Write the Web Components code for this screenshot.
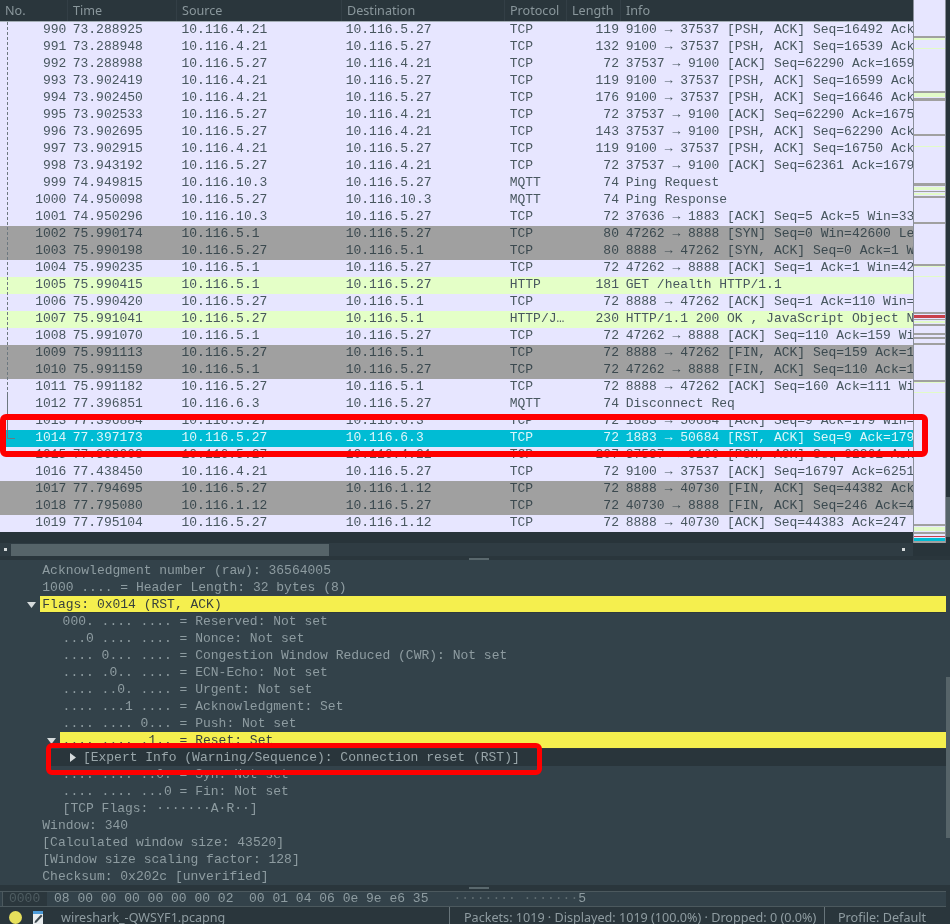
<!DOCTYPE html>
<html><head><meta charset="utf-8"><title>Wireshark</title>
<style>
html,body{margin:0;height:924px;overflow:hidden;background:#2a363c}
ws-app{filter:blur(.45px)}
</style></head>
<body>
<ws-app></ws-app>
<script>
const MONO='"Liberation Mono",monospace';
const SANS='"Noto Sans",sans-serif';
function def(name,css,html,init){
  customElements.define(name,class extends HTMLElement{
    connectedCallback(){
      if(this.shadowRoot)return;
      const r=this.attachShadow({mode:'open'});
      r.innerHTML='<style>'+css+'</style>'+html;
      if(init)init.call(this,r);
    }
  });
}
const A=' \u2192 ';
const PSH=s=>'9100'+A+'37537 [PSH, ACK] Seq='+s+' Ack';
const I4='10.116.4.21',F='10.116.5.27',P1='10.116.5.1',T3='10.116.10.3',S3='10.116.6.3',O12='10.116.1.12';
const packets=[
['990','73.288925',I4,F,'TCP','119',PSH(16492)],
['991','73.288948',I4,F,'TCP','132',PSH(16539)],
['992','73.288988',F,I4,'TCP','72','37537'+A+'9100 [ACK] Seq=62290 Ack=1659'],
['993','73.902419',I4,F,'TCP','119',PSH(16599)],
['994','73.902450',I4,F,'TCP','176',PSH(16646)],
['995','73.902533',F,I4,'TCP','72','37537'+A+'9100 [ACK] Seq=62290 Ack=1675'],
['996','73.902695',F,I4,'TCP','143','37537'+A+'9100 [PSH, ACK] Seq=62290 Ack'],
['997','73.902915',I4,F,'TCP','119',PSH(16750)],
['998','73.943192',F,I4,'TCP','72','37537'+A+'9100 [ACK] Seq=62361 Ack=1679'],
['999','74.949815',T3,F,'MQTT','74','Ping Request'],
['1000','74.950098',F,T3,'MQTT','74','Ping Response'],
['1001','74.950296',T3,F,'TCP','72','37636'+A+'1883 [ACK] Seq=5 Ack=5 Win=33'],
['1002','75.990174',P1,F,'TCP','80','47262'+A+'8888 [SYN] Seq=0 Win=42600 Le','g'],
['1003','75.990198',F,P1,'TCP','80','8888'+A+'47262 [SYN, ACK] Seq=0 Ack=1 W','g'],
['1004','75.990235',P1,F,'TCP','72','47262'+A+'8888 [ACK] Seq=1 Ack=1 Win=42'],
['1005','75.990415',P1,F,'HTTP','181','GET /health HTTP/1.1','h'],
['1006','75.990420',F,P1,'TCP','72','8888'+A+'47262 [ACK] Seq=1 Ack=110 Win='],
['1007','75.991041',F,P1,'HTTP/J\u2026','230','HTTP/1.1 200 OK , JavaScript Object N','h'],
['1008','75.991070',P1,F,'TCP','72','47262'+A+'8888 [ACK] Seq=110 Ack=159 Wi'],
['1009','75.991113',F,P1,'TCP','72','8888'+A+'47262 [FIN, ACK] Seq=159 Ack=1','g'],
['1010','75.991159',P1,F,'TCP','72','47262'+A+'8888 [FIN, ACK] Seq=110 Ack=1','g'],
['1011','75.991182',F,P1,'TCP','72','8888'+A+'47262 [ACK] Seq=160 Ack=111 Wi'],
['1012','77.396851',S3,F,'MQTT','74','Disconnect Req'],
['1013','77.396884',F,S3,'TCP','72','1883'+A+'50684 [ACK] Seq=9 Ack=179 Win='],
['1014','77.397173',F,S3,'TCP','72','1883'+A+'50684 [RST, ACK] Seq=9 Ack=179','s'],
['1015','77.398008',F,I4,'TCP','207','37537'+A+'9100 [PSH, ACK] Seq=62361 Ack'],
['1016','77.438450',I4,F,'TCP','72','9100'+A+'37537 [ACK] Seq=16797 Ack=6251'],
['1017','77.794695',F,O12,'TCP','72','8888'+A+'40730 [FIN, ACK] Seq=44382 Ack','g'],
['1018','77.795080',O12,F,'TCP','72','40730'+A+'8888 [FIN, ACK] Seq=246 Ack=4','g'],
['1019','77.795104',F,O12,'TCP','72','8888'+A+'40730 [ACK] Seq=44383 Ack=247']
];
const details=[
[0,'Acknowledgment number (raw): 36564005'],
[0,'1000 .... = Header Length: 32 bytes (8)'],
[0,'Flags: 0x014 (RST, ACK)','sel','down'],
[1,'000. .... .... = Reserved: Not set'],
[1,'...0 .... .... = Nonce: Not set'],
[1,'.... 0... .... = Congestion Window Reduced (CWR): Not set'],
[1,'.... .0.. .... = ECN-Echo: Not set'],
[1,'.... ..0. .... = Urgent: Not set'],
[1,'.... ...1 .... = Acknowledgment: Set'],
[1,'.... .... 0... = Push: Not set'],
[1,'.... .... .1.. = Reset: Set','sel','down'],
[2,'[Expert Info (Warning/Sequence): Connection reset (RST)]','dark','right'],
[1,'.... .... ..0. = Syn: Not set'],
[1,'.... .... ...0 = Fin: Not set'],
[1,'[TCP Flags: \u00b7\u00b7\u00b7\u00b7\u00b7\u00b7\u00b7A\u00b7R\u00b7\u00b7]'],
[0,'Window: 340'],
[0,'[Calculated window size: 43520]'],
[0,'[Window size scaling factor: 128]'],
[0,'Checksum: 0x202c [unverified]']
];

def('ws-packet-header',
`:host{display:grid;grid-template-columns:68px 109px 165px 163px 62px 54px 1fr;height:21px;background:#2a363c;border-bottom:1px solid #a3adb5;
 font:12.6px/21px ${SANS};color:#8a979c}
 div{padding-left:5px;border-right:1px solid #333f46;white-space:nowrap;overflow:hidden}
 div:first-child{padding-left:4px}div:last-child{border:0}`,
`<div>No.</div><div>Time</div><div>Source</div><div>Destination</div><div>Protocol</div><div>Length</div><div>Info</div>`);

def('ws-packet-row',
`:host{display:grid;grid-template-columns:72.7px 108.8px 164.2px 164px 60px 49.3px 1fr;height:17px;background:#e7e6ff;color:#48575f;font:13px/15px ${MONO};overflow:hidden;white-space:pre}
 :host([kind=g]){background:#a0a0a0;color:#3b494f}
 :host([kind=h]){background:#e4ffc7}
 :host([kind=s]){background:#00bcd4;color:#dcf6fa}
 span{overflow:hidden}
 .n{text-align:right;padding-right:6.3px}
 .l{text-align:right}
 .i{padding-left:6.7px}`,
`<span class="n"></span><span></span><span></span><span></span><span></span><span class="l"></span><span class="i"></span>`,
function(r){
  r.querySelectorAll('span').forEach((s,i)=>{s.textContent=this.cells[i];});
});

def('ws-packet-list',
`:host{display:block;position:relative;height:510px;overflow:hidden;background:#e7e6ff}
 svg{position:absolute;left:0;top:0;pointer-events:none}`,
`<div id="r"></div>
 <svg width="20" height="510" viewBox="0 0 20 510"><path d="M7.5 0V371" fill="none" stroke="#6d7880" stroke-dasharray="3 2"/><path d="M7.5 371V416.500H15" fill="none" stroke="#6d7880"/></svg>`,
function(r){
  const box=r.getElementById('r');
  packets.forEach(p=>{
    const e=document.createElement('ws-packet-row');
    if(p[7])e.setAttribute('kind',p[7]);
    e.cells=p.slice(0,7);
    box.appendChild(e);
  });
});

def('ws-minimap',
`:host{display:block;width:32px;height:543px;background:#e7e6ff;border-left:1px solid #8b909b;border-right:1px solid #8b909b;overflow:hidden}
 svg{display:block}`,
`<svg width="32" height="543" viewBox="0 0 32 543"></svg>`,
function(r){
  const G='#a0a0a0',L='#e2fbc8',R='#c8404a',C='#00bcd4';
  const m=[[36,2,G],[38,2,L],[48,1,L],[91,2,G],[93,4,L],[98,3,G],[134,2,G],[146,1,L],[183,3,G],[187,3,L],[191,1,G],[193,2,L],[196,2,G],
  [222,2,G],[264,2,G],[266,1,L],[276,1,L],[312,2,G],[315,3,R],[319,1,G],[321,2,L],[324,2,G],[333,2,G],[337,2,G],[343,2,G],
  [380,2,G],[382,1,L],[392,1,L],[524,2,G],[527,4,L],[532,2,G],[536,1,R],[538,3,C],[541,2,G]];
  r.querySelector('svg').innerHTML=m.map(x=>`<rect x="0" y="${x[0]}" width="32" height="${x[1]}" fill="${x[2]}"/>`).join('');
});

def('ws-hscroll',
`:host{display:flex;flex-direction:column;height:24px;background:#28343a}
 .t{margin-top:11px;height:13px;display:flex;align-items:center;background:#2f3c43;padding:0 4px}
 i{display:block;width:3px;height:3px;background:#d5dadb}
 b{display:block;width:318px;height:12px;background:#566469;margin:0 auto 0 4px}`,
`<div class="t"><i></i><b></b><i style="margin-right:4px"></i></div>`);

def('ws-vbar',
`:host{display:block;position:relative;width:4px;background:#28343a;overflow:hidden}
 i{position:absolute;left:0;right:0;background:#566469}`,
`<i></i>`,function(r){const i=r.querySelector('i');i.style.top=this.getAttribute('from')+'px';i.style.height=this.getAttribute('len')+'px';});

def('ws-detail-row',
`:host{display:flex;height:17px;font:13px/17px ${MONO};color:#8e9ca1;white-space:pre}
 :host([state=dark]){background:linear-gradient(90deg,transparent 48px,#29353b 48px);color:#98a5a9}
 .g{flex:none;display:flex;justify-content:flex-end;align-items:center}
 .g svg{display:block;margin-right:4px}
 .b{flex:1;padding-left:2.6px;overflow:hidden}
 :host([state=sel]) .b{background:#f5ef4e;color:#37403d;border-bottom:1px solid #2f3a3c;box-sizing:border-box}`,
`<div class="g"></div><div class="b"><slot></slot></div>`,
function(r){
  const lv=+this.getAttribute('level'),a=this.getAttribute('arrow'),g=r.querySelector('.g');
  g.style.width=(39.7+lv*20.3)+'px';
  if(a==='down')g.innerHTML='<svg width="9" height="6"><path d="M0 0H9L4.5 6Z" fill="#d6dbdc"/></svg>';
  if(a==='right')g.innerHTML='<svg width="6" height="9"><path d="M0 0V9L6 4.5Z" fill="#d6dbdc"/></svg>';
});

def('ws-detail-pane',
`:host{display:flex;height:325px;background:#33424a}
 .c{flex:none;width:946px;padding-top:2px;box-sizing:border-box;overflow:hidden}`,
`<div class="c"></div><ws-vbar from="117" len="161" style="background:#33424a"></ws-vbar>`,
function(r){
  const c=r.querySelector('.c');
  details.forEach(d=>{
    const e=document.createElement('ws-detail-row');
    e.setAttribute('level',d[0]);
    if(d[2])e.setAttribute('state',d[2]);
    if(d[3])e.setAttribute('arrow',d[3]);
    e.textContent=d[1];
    c.appendChild(e);
  });
});

def('ws-splitter',
`:host{display:flow-root;background:#2a363c;height:6px}
 i{display:block;width:20px;height:2px;margin:2px 0 0 469px;background:#5a686d}`,`<i></i>`);

def('ws-hex-pane',
`:host{display:flex;height:14px;margin-right:4px;border-top:1px solid #4c595e;border-bottom:1px solid #4c595e;background:#33424a;font:13px/14px ${MONO};color:#8e9ca1;white-space:pre;overflow:hidden}
 .o{flex:none;width:45px;box-sizing:border-box;padding-left:6px;margin-left:2px;background:#2b373d;color:#4f5d62;border-left:1px solid #4c595e}
 .h{flex:none;width:399.4px;padding-left:7px;box-sizing:border-box}
 .d{color:#5f6d72}`,
`<span class="o">0000</span><span class="h">08 00 00 00 00 00 00 02  00 01 04 06 0e 9e e6 35</span><span style="padding-left:7px"><span class="d">\u00b7\u00b7\u00b7\u00b7\u00b7\u00b7\u00b7\u00b7 \u00b7\u00b7\u00b7\u00b7\u00b7\u00b7\u00b7</span>5</span>`);

def('ws-status-bar',
`:host{display:flex;align-items:flex-start;height:17px;background:#2a363c;font:12.6px/22px ${SANS};color:#8f9ca1;white-space:nowrap;overflow:hidden}
 .c{flex:none;margin:4px 0 0 9px;width:13px;height:13px;border-radius:50%;background:#e6e05c}
 svg{flex:none;margin:3px 0 0 10px}
 .f{flex:none;width:405px;padding-left:17px;box-sizing:border-box}
 .s{flex:none;border-left:1px solid #67747a;height:17px;box-sizing:border-box}
 .p{width:375px;padding-left:14px}
 .q{padding-left:13px}`,
`<div class="c"></div>
 <svg width="12" height="15" viewBox="0 0 12 15"><path d="M1 1H11V15H1Z" fill="#e9edef"/><path d="M1 1H11V4H1Z" fill="#4d9bd8"/><path d="M3 11L9 4.5L10.5 6L4.5 12.5L2.5 13Z" fill="#3f4a50"/></svg>
 <div class="f">wireshark_-QWSYF1.pcapng</div>
 <div class="s p">Packets: 1019 \u00b7 Displayed: 1019 (100.0%) \u00b7 Dropped: 0 (0.0%)</div>
 <div class="s q">Profile: Default</div>`);

def('ws-highlight',
`:host{display:block;position:absolute;box-sizing:border-box;border:6px solid #ff0000;border-radius:6px;z-index:5;pointer-events:none}`,
``,function(){
  const s=this.style;['left','top','width','height'].forEach(k=>s[k]=this.getAttribute(k)+'px');
  s.borderWidth=this.getAttribute('stroke')+'px';
});

def('ws-app',
`:host{display:block;position:relative;width:950px;height:924px;overflow:hidden;background:#2a363c}
 .top{display:flex;height:556px}
 .left{flex:none;width:913px;display:flex;flex-direction:column}
 .right{flex:none;width:37px;display:flex;background:#28343a}
 ws-vbar{height:556px}`,
`<div class="top">
  <div class="left"><ws-packet-header></ws-packet-header><ws-packet-list></ws-packet-list><ws-hscroll></ws-hscroll></div>
  <div class="right"><ws-minimap></ws-minimap><ws-vbar from="497" len="40"></ws-vbar></div>
 </div>
 <ws-splitter style="height:4px"></ws-splitter>
 <ws-detail-pane></ws-detail-pane>
 <ws-splitter></ws-splitter>
 <ws-hex-pane></ws-hex-pane>
 <ws-status-bar></ws-status-bar>
 <ws-highlight left="0" top="414" width="928" height="43" stroke="6"></ws-highlight>
 <ws-highlight left="46" top="743" width="496" height="32" stroke="5"></ws-highlight>`);
</script>
</body></html>
